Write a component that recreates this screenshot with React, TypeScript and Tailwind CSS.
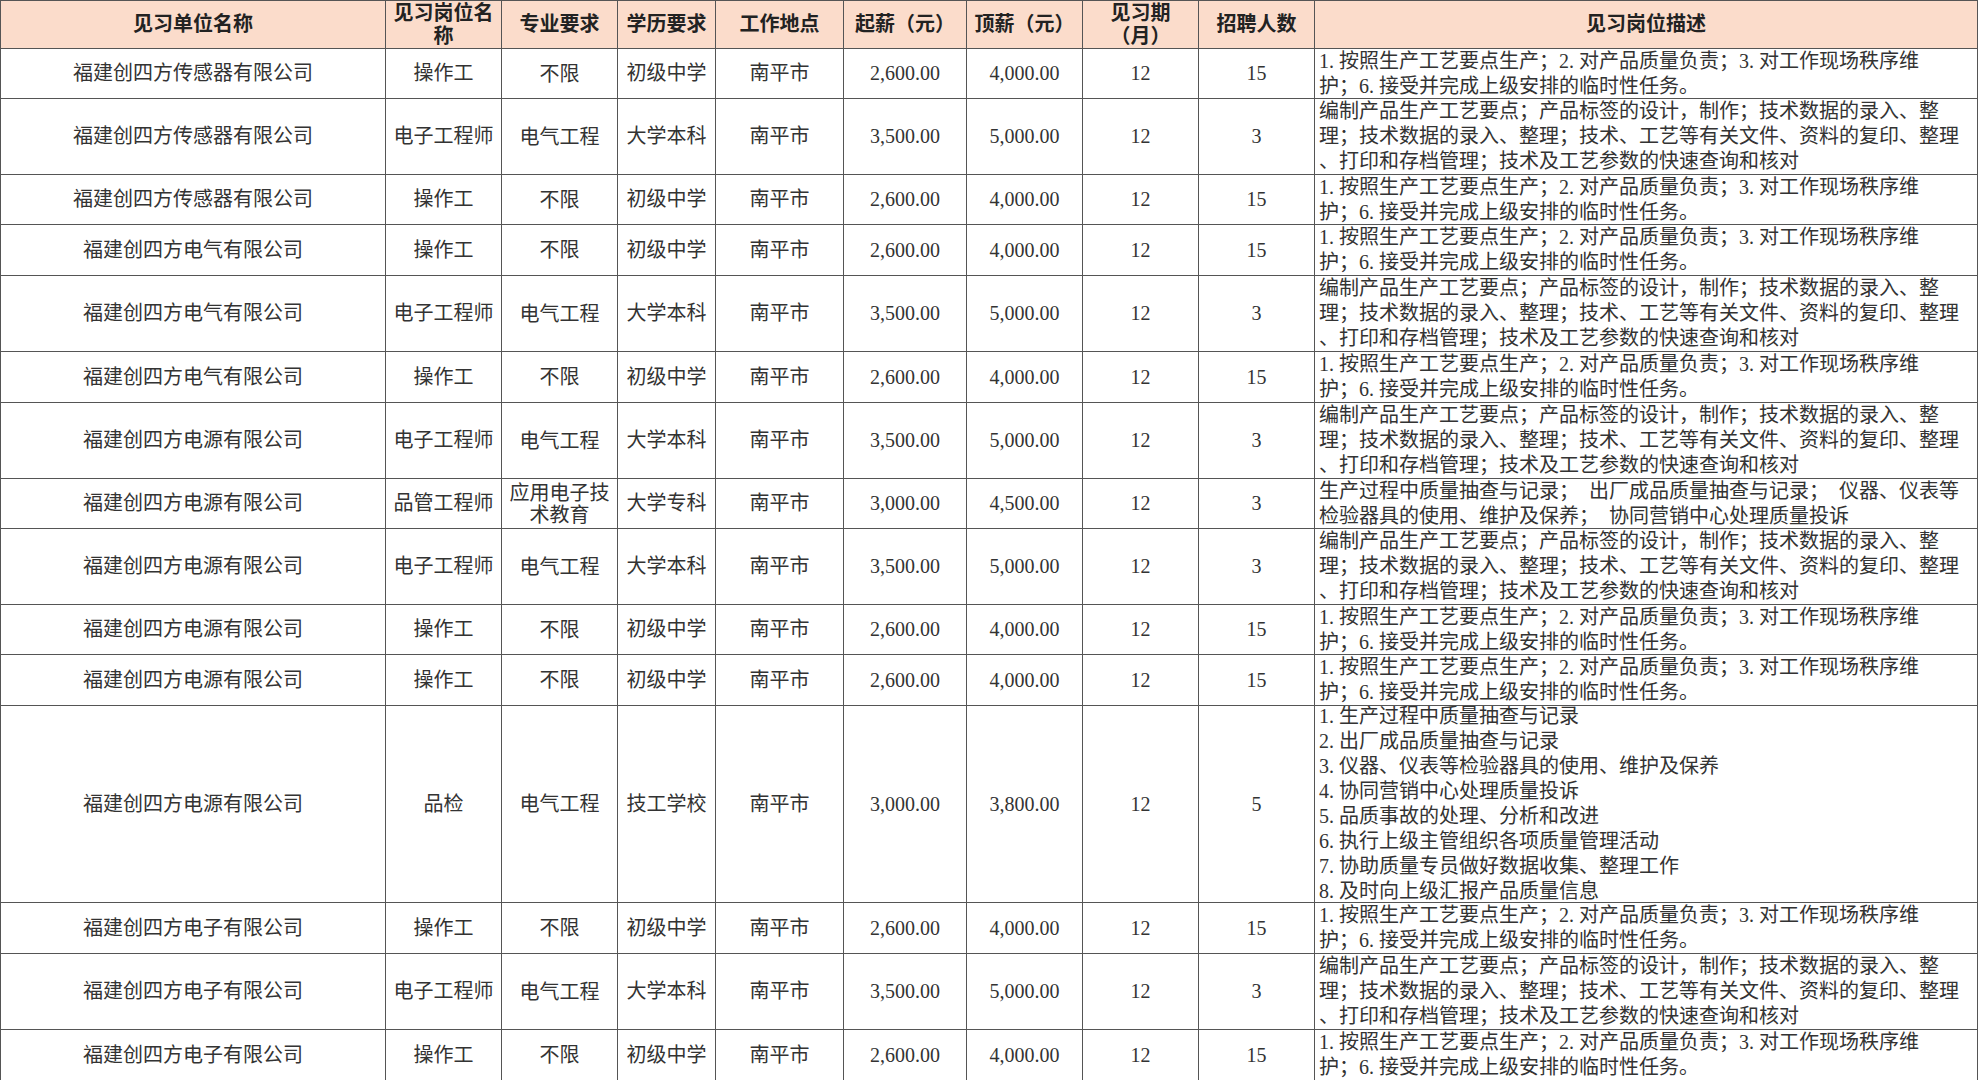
const D1 = ["1. 按照生产工艺要点生产；2. 对产品质量负责；3. 对工作现场秩序维", "护；6. 接受并完成上级安排的临时性任务。"];
const D2 = ["编制产品生产工艺要点；产品标签的设计，制作；技术数据的录入、整", "理；技术数据的录入、整理；技术、工艺等有关文件、资料的复印、整理", "、打印和存档管理；技术及工艺参数的快速查询和核对"];
const D3 = ["生产过程中质量抽查与记录；  出厂成品质量抽查与记录；  仪器、仪表等", "检验器具的使用、维护及保养；  协同营销中心处理质量投诉"];
const D4 = ["1. 生产过程中质量抽查与记录", "2. 出厂成品质量抽查与记录", "3. 仪器、仪表等检验器具的使用、维护及保养", "4. 协同营销中心处理质量投诉", "5. 品质事故的处理、分析和改进", "6. 执行上级主管组织各项质量管理活动", "7. 协助质量专员做好数据收集、整理工作", "8. 及时向上级汇报产品质量信息"];

type Row = { c: string; p: string[]; m: string[]; e: string; lo: string; s: string; t: string; n: string; d: string[]; h: number };
const op = (c: string, h = 50): Row => ({ c, p: ["操作工"], m: ["不限"], e: "初级中学", lo: "南平市", s: "2,600.00", t: "4,000.00", n: "15", d: D1, h });
const en = (c: string, h = 76): Row => ({ c, p: ["电子工程师"], m: ["电气工程"], e: "大学本科", lo: "南平市", s: "3,500.00", t: "5,000.00", n: "3", d: D2, h });
const S = "福建创四方传感器有限公司", E = "福建创四方电气有限公司", P = "福建创四方电源有限公司", Z = "福建创四方电子有限公司";

const rows: Row[] = [
  op(S, 50), en(S), op(S), op(E, 51), en(E), op(E, 51), en(P),
  { c: P, p: ["品管工程师"], m: ["应用电子技", "术教育"], e: "大学专科", lo: "南平市", s: "3,000.00", t: "4,500.00", n: "3", d: D3, h: 50 },
  en(P), op(P), op(P, 51),
  { c: P, p: ["品检"], m: ["电气工程"], e: "技工学校", lo: "南平市", s: "3,000.00", t: "3,800.00", n: "5", d: D4, h: 197 },
  op(Z, 51), en(Z), op(Z, 51),
];

const W = ["w-[385px]", "w-[116px]", "w-[116px]", "w-[98px]", "w-[128px]", "w-[123px]", "w-[116px]", "w-[116px]", "w-[116px]"];
const heads = [["见习单位名称"], ["见习岗位名", "称"], ["专业要求"], ["学历要求"], ["工作地点"], ["起薪（元）"], ["顶薪（元）"], ["见习期", "（月）"], ["招聘人数"]];
const cell = "flex flex-col items-center justify-center text-center border-r border-b border-[#555] shrink-0";

export default function App() {
  return (
    <div className="w-[1978px] h-[1080px] overflow-hidden bg-white text-[#333] text-[20px] leading-[25px]" style={{ fontFamily: '"Liberation Serif", "Noto Sans CJK SC", serif' }}>
      <div className="flex h-[49px] bg-[#fbdccb] font-bold text-[#222] border-t border-l border-[#555]">
        {heads.map((h, i) => (
          <div key={i} className={`${cell} ${W[i]}`}>{h.map((l) => <div key={l} className="leading-[23px]">{l}</div>)}</div>
        ))}
        <div className={`${cell} flex-1`}>见习岗位描述</div>
      </div>
      {rows.map((r, i) => (
        <div key={i} className="flex border-l border-[#555]" style={{ height: r.h }}>
          <div className={`${cell} ${W[0]}`}>{r.c}</div>
          <div className={`${cell} ${W[1]}`}>{r.p.map((l) => <div key={l}>{l}</div>)}</div>
          <div className={`${cell} ${W[2]} leading-[22px]`}>{r.m.map((l) => <div key={l}>{l}</div>)}</div>
          <div className={`${cell} ${W[3]}`}>{r.e}</div>
          <div className={`${cell} ${W[4]}`}>{r.lo}</div>
          <div className={`${cell} ${W[5]}`}>{r.s}</div>
          <div className={`${cell} ${W[6]}`}>{r.t}</div>
          <div className={`${cell} ${W[7]}`}>{"12"}</div>
          <div className={`${cell} ${W[8]}`}>{r.n}</div>
          <div className="flex-1 flex flex-col justify-center px-[4px] border-r border-b border-[#555] whitespace-pre overflow-hidden">
            {r.d.map((l) => <div key={l}>{l}</div>)}
          </div>
        </div>
      ))}
    </div>
  );
}
